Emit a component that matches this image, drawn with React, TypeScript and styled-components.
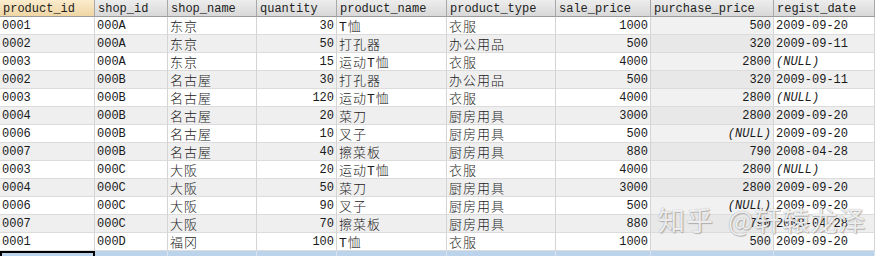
import styled, { createGlobalStyle } from "styled-components"

const GlobalStyle = createGlobalStyle`
  html, body {
    margin: 0;
    padding: 0;
    background: #ffffff;
  }
`

type Align = "left" | "right"

type Column = {
  key: string
  width: number
  align: Align
  cjk?: boolean
}

const columns: Column[] = [
  { key: "product_id", width: 95, align: "left" },
  { key: "shop_id", width: 73, align: "left" },
  { key: "shop_name", width: 89, align: "left", cjk: true },
  { key: "quantity", width: 80, align: "right" },
  { key: "product_name", width: 110, align: "left", cjk: true },
  { key: "product_type", width: 109, align: "left", cjk: true },
  { key: "sale_price", width: 95, align: "right" },
  { key: "purchase_price", width: 123, align: "right" },
  { key: "regist_date", width: 101, align: "left" },
]

const rows: string[][] = [
  ["0001", "000A", "东京", "30", "T恤", "衣服", "1000", "500", "2009-09-20"],
  ["0002", "000A", "东京", "50", "打孔器", "办公用品", "500", "320", "2009-09-11"],
  ["0003", "000A", "东京", "15", "运动T恤", "衣服", "4000", "2800", ""],
  ["0002", "000B", "名古屋", "30", "打孔器", "办公用品", "500", "320", "2009-09-11"],
  ["0003", "000B", "名古屋", "120", "运动T恤", "衣服", "4000", "2800", ""],
  ["0004", "000B", "名古屋", "20", "菜刀", "厨房用具", "3000", "2800", "2009-09-20"],
  ["0006", "000B", "名古屋", "10", "叉子", "厨房用具", "500", "", "2009-09-20"],
  ["0007", "000B", "名古屋", "40", "擦菜板", "厨房用具", "880", "790", "2008-04-28"],
  ["0003", "000C", "大阪", "20", "运动T恤", "衣服", "4000", "2800", ""],
  ["0004", "000C", "大阪", "50", "菜刀", "厨房用具", "3000", "2800", "2009-09-20"],
  ["0006", "000C", "大阪", "90", "叉子", "厨房用具", "500", "", "2009-09-20"],
  ["0007", "000C", "大阪", "70", "擦菜板", "厨房用具", "880", "790", "2008-04-28"],
  ["0001", "000D", "福冈", "100", "T恤", "衣服", "1000", "500", "2009-09-20"],
]

const gridTemplate = columns.map((c) => `${c.width}px`).join(" ")

const Viewport = styled.div`
  position: relative;
  width: 875px;
  height: 256px;
  overflow: hidden;
  background: #ffffff;
  font-family: "Liberation Mono", "Noto Sans CJK SC", monospace;
  font-size: 12px;
  color: #1a1a1a;
`

const Row = styled.div`
  display: grid;
  grid-template-columns: ${gridTemplate};
`

const HeaderCell = styled.div<{ $active?: boolean }>`
  height: 17px;
  box-sizing: border-box;
  padding: 1px 3px 0;
  display: flex;
  align-items: center;
  background: ${({ $active }) =>
    $active
      ? "linear-gradient(#fbeccd, #efd5a4)"
      : "linear-gradient(#ededed, #d8d8d8)"};
  border-right: 1px solid #a8a8a8;
  border-bottom: 1px solid #9c9c9c;
  white-space: nowrap;
  overflow: hidden;
  color: #222222;
`

const Cell = styled.div<{ $align: Align; $shade: boolean; $cjk?: boolean; $tint?: boolean }>`
  height: 18px;
  box-sizing: border-box;
  padding: 0 2px;
  display: flex;
  align-items: center;
  justify-content: ${({ $align }) => ($align === "right" ? "flex-end" : "flex-start")};
  background: ${({ $shade, $tint }) =>
    $tint ? ($shade ? "#e8e8e8" : "#f1f1f1") : $shade ? "#efefef" : "#ffffff"};
  border-right: 1px solid #d4d4d4;
  border-bottom: 1px solid #dcdcdc;
  white-space: nowrap;
  overflow: hidden;
  font-size: ${({ $cjk }) => ($cjk ? "13px" : "12px")};
  font-weight: ${({ $cjk }) => ($cjk ? 300 : 400)};
  letter-spacing: ${({ $cjk }) => ($cjk ? "1px" : "0")};
`

const Null = styled.span`
  font-style: italic;
  font-size: 12px;
  font-weight: 400;
  letter-spacing: 0;
`

const NewCell = styled.div<{ $selected?: boolean }>`
  height: 10px;
  box-sizing: border-box;
  background: #bcd3ec;
  border-right: 1px solid #d8e3f0;
  border: ${({ $selected }) => ($selected ? "2px solid #000000" : undefined)};
`

const Watermark = styled.div`
  position: absolute;
  left: 658px;
  top: 200px;
  font-family: "Noto Sans CJK SC", sans-serif;
  font-size: 27px;
  letter-spacing: 1px;
  color: rgba(255, 255, 255, 0.85);
  text-shadow: 0 0 1px rgba(80, 80, 80, 0.55), 1px 1px 1px rgba(90, 90, 90, 0.35);
  white-space: nowrap;
  pointer-events: none;
`

const At = styled.span`
  margin-left: 14px;
`

export default function App() {
  return (
    <>
      <GlobalStyle />
      <Viewport>
        <Row>
          {columns.map((c, i) => (
            <HeaderCell key={c.key} $active={i === 0}>
              {c.key}
            </HeaderCell>
          ))}
        </Row>
        {rows.map((r, ri) => (
          <Row key={ri}>
            {r.map((v, ci) => (
              <Cell
                key={ci}
                $align={columns[ci].align}
                $shade={ri % 2 === 1}
                $cjk={columns[ci].cjk}
                $tint={columns[ci].key === "purchase_price"}
              >
                {v === "" ? <Null>(NULL)</Null> : v}
              </Cell>
            ))}
          </Row>
        ))}
        <Row>
          {columns.map((c, i) => (
            <NewCell key={c.key} $selected={i === 0} />
          ))}
        </Row>
        <Watermark>
          知乎<At>@轩辕龙泽</At>
        </Watermark>
      </Viewport>
    </>
  )
}
